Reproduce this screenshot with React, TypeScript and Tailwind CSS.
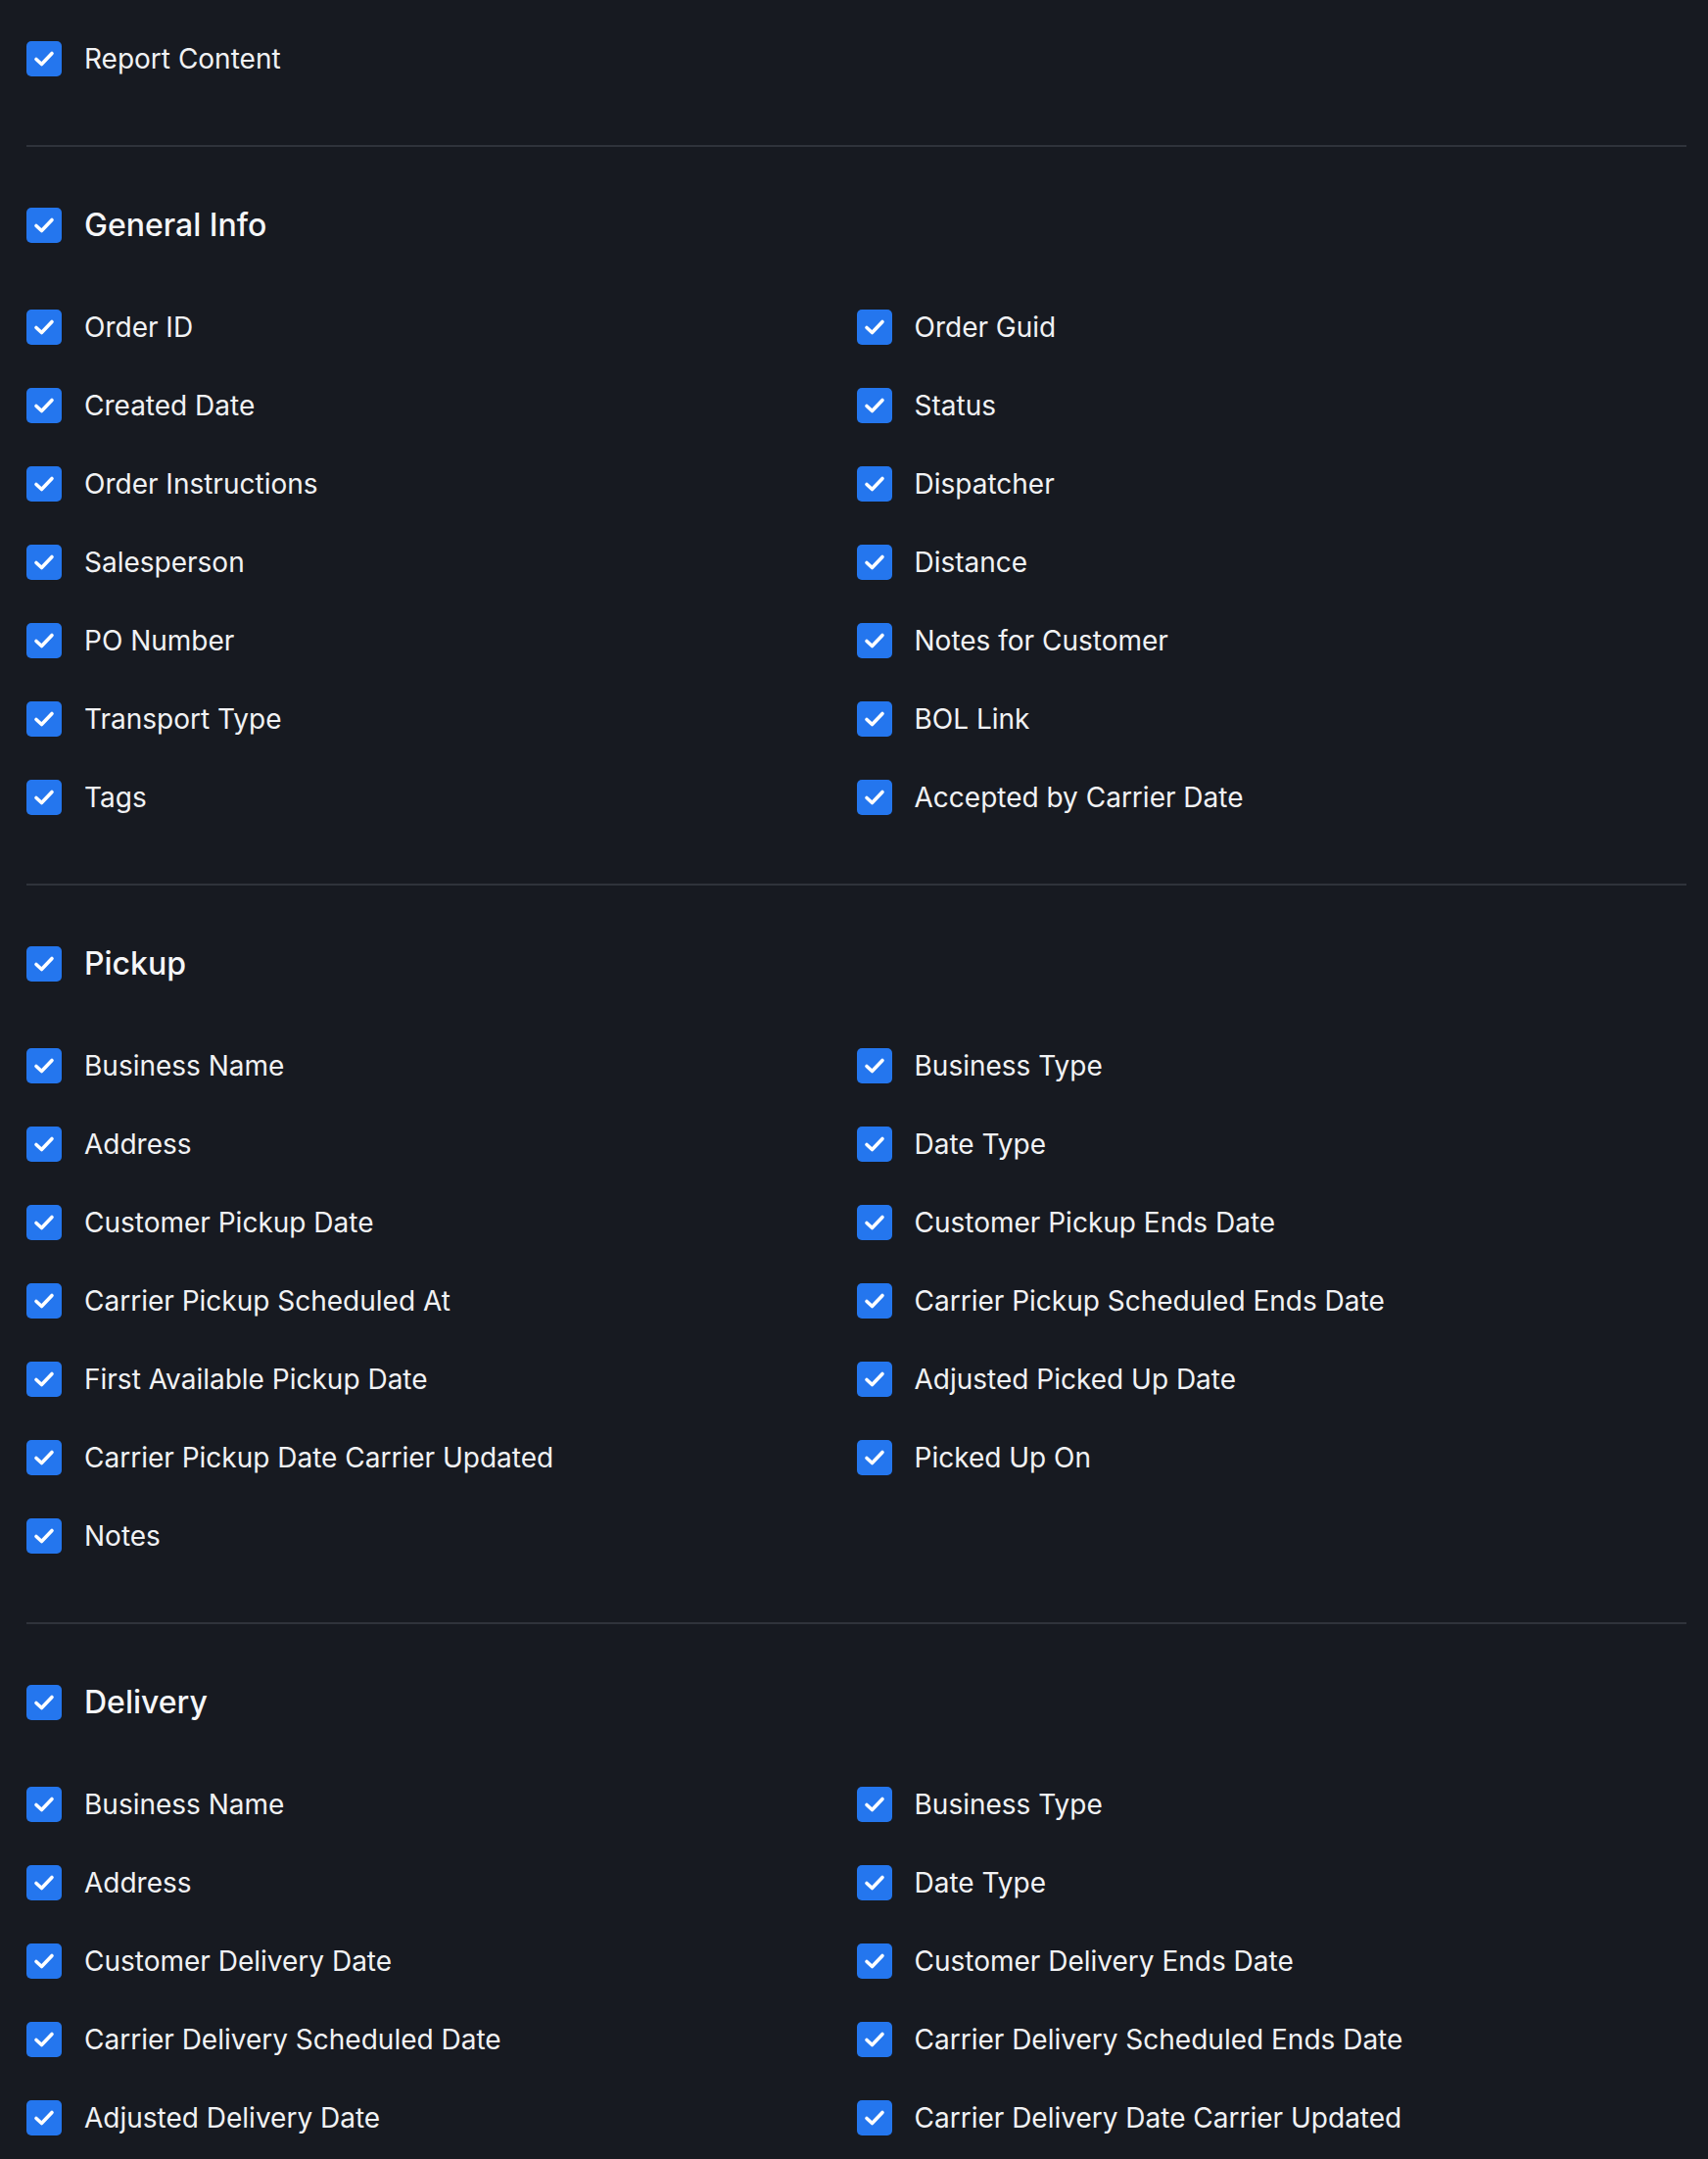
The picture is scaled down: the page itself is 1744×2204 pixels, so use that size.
import React from "react";

function Check() {
  return (
    <span className="flex h-[36px] w-[36px] shrink-0 items-center justify-center rounded-[5px] bg-[#2476ee]">
      <svg width="36" height="36" viewBox="0 0 36 36" fill="none">
        <polyline
          points="10,18.5 15.5,23.5 26,12.5"
          stroke="#ffffff"
          strokeWidth="3.6"
          strokeLinecap="round"
          strokeLinejoin="round"
        />
      </svg>
    </span>
  );
}

function Item({ label, heading = false }: { label: string; heading?: boolean }) {
  return (
    <div className="flex h-[36px] items-center gap-[23px]">
      <Check />
      <span
        className={
          heading
            ? "text-[32px] font-medium leading-none text-[#f5f6f8]"
            : "text-[28px] font-normal leading-none text-[#f1f2f4]"
        }
      >
        {label}
      </span>
    </div>
  );
}

function interleave(left: string[], right: string[]) {
  const out: string[] = [];
  const n = Math.max(left.length, right.length);
  for (let i = 0; i < n; i++) {
    out.push(left[i] ?? "");
    out.push(right[i] ?? "");
  }
  return out;
}

function Section({ title, left, right }: { title: string; left: string[]; right: string[] }) {
  const items = interleave(left, right);
  return (
    <section className="border-t-2 border-[#2f333b] pt-[62px] pb-[70px]">
      <Item label={title} heading />
      <div className="mt-[68px] grid grid-cols-2 gap-y-[44px]">
        {items.map((l, i) => (l ? <Item key={i} label={l} /> : <div key={i} />))}
      </div>
    </section>
  );
}

export default function App() {
  return (
    <div
      className="min-h-[2204px] bg-[#171a21] pl-[27px] pr-[22px]"
      style={{ fontFamily: "Inter, 'Noto Sans', sans-serif" }}
    >
      <div className="pt-[42px] pb-[70px]">
        <Item label="Report Content" />
      </div>
      <Section
        title="General Info"
        left={["Order ID", "Created Date", "Order Instructions", "Salesperson", "PO Number", "Transport Type", "Tags"]}
        right={["Order Guid", "Status", "Dispatcher", "Distance", "Notes for Customer", "BOL Link", "Accepted by Carrier Date"]}
      />
      <Section
        title="Pickup"
        left={[
          "Business Name",
          "Address",
          "Customer Pickup Date",
          "Carrier Pickup Scheduled At",
          "First Available Pickup Date",
          "Carrier Pickup Date Carrier Updated",
          "Notes",
        ]}
        right={[
          "Business Type",
          "Date Type",
          "Customer Pickup Ends Date",
          "Carrier Pickup Scheduled Ends Date",
          "Adjusted Picked Up Date",
          "Picked Up On",
        ]}
      />
      <Section
        title="Delivery"
        left={[
          "Business Name",
          "Address",
          "Customer Delivery Date",
          "Carrier Delivery Scheduled Date",
          "Adjusted Delivery Date",
        ]}
        right={[
          "Business Type",
          "Date Type",
          "Customer Delivery Ends Date",
          "Carrier Delivery Scheduled Ends Date",
          "Carrier Delivery Date Carrier Updated",
        ]}
      />
    </div>
  );
}
